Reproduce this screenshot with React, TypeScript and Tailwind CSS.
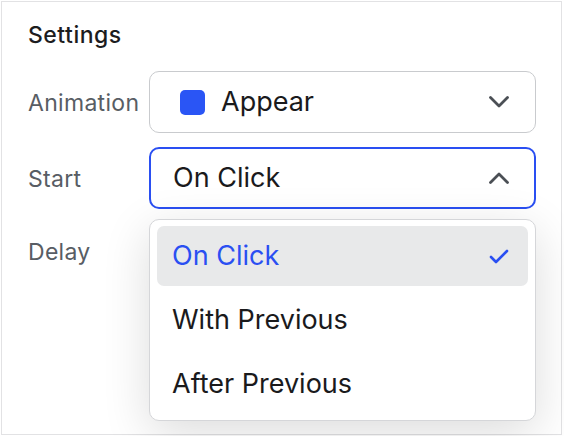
import React from "react";

const font = { fontFamily: "Inter, 'Noto Sans', sans-serif" };

function ChevronDown() {
  return (
    <svg width="20" height="12" viewBox="0 0 20 12" fill="none">
      <polyline points="1.5,1.5 10,10 18.5,1.5" stroke="#4b4f55" strokeWidth="2.8" strokeLinecap="round" strokeLinejoin="round" />
    </svg>
  );
}

function ChevronUp() {
  return (
    <svg width="20" height="12" viewBox="0 0 20 12" fill="none">
      <polyline points="1.5,10.5 10,2 18.5,10.5" stroke="#4b4f55" strokeWidth="2.8" strokeLinecap="round" strokeLinejoin="round" />
    </svg>
  );
}

function Check() {
  return (
    <svg width="20" height="15" viewBox="0 0 20 15" fill="none">
      <polyline points="2,8 7,13 18,2" stroke="#2a4ff2" strokeWidth="2.6" strokeLinecap="round" strokeLinejoin="round" />
    </svg>
  );
}

export default function App() {
  return (
    <div className="w-[564px] h-[436px] bg-white pt-px pl-px" style={font}>
      <div className="w-[561px] h-[434px] border border-[#e2e2e4] bg-white pl-[26px] pr-[25px] pt-[18px]">
        <div className="text-[23px] leading-[30px] font-medium tracking-[0.5px] text-[#1c1c1e]">Settings</div>
        <div className="mt-[21px] flex flex-col gap-[14px]">
          <div className="flex items-center">
            <div className="w-[121px] text-[23px] tracking-[0.3px] text-[#585d64] pt-[2px]">Animation</div>
            <div className="flex-1 h-[62px] rounded-[10px] border-[1.5px] border-[#c9cbce] flex items-center pl-[30px] pr-[26px]">
              <div className="w-[25px] h-[25px] rounded-[5px] bg-[#2a55f5]" />
              <span className="ml-[16px] text-[27px] text-[#1a1a1c] flex-1">Appear</span>
              <ChevronDown />
            </div>
          </div>
          <div className="flex items-center">
            <div className="w-[121px] text-[23px] tracking-[0.3px] text-[#585d64] pt-[2px]">Start</div>
            <div className="relative flex-1">
              <div className="h-[62px] rounded-[10px] border-2 border-[#2a4ff2] flex items-center pl-[22px] pr-[25px]">
                <span className="text-[27px] text-[#1a1a1c] flex-1">On Click</span>
                <ChevronUp />
              </div>
              <div className="absolute left-0 right-0 top-[72px] z-10 rounded-[10px] border-[1.5px] border-[#d5d6d9] bg-white px-[7px] py-[6px] flex flex-col gap-[4px] shadow-[0_12px_48px_rgba(0,0,0,0.14)]">
                <div className="h-[60px] rounded-[7px] bg-[#e8e9ea] flex items-center pl-[15px] pr-[19px]">
                  <span className="flex-1 text-[27px] text-[#2a4ff2]">On Click</span>
                  <Check />
                </div>
                <div className="h-[60px] flex items-center pl-[15px]">
                  <span className="text-[27px] text-[#1a1a1c]">With Previous</span>
                </div>
                <div className="h-[60px] flex items-center pl-[15px]">
                  <span className="text-[27px] text-[#1a1a1c]">After Previous</span>
                </div>
              </div>
            </div>
          </div>
          <div className="flex items-start">
            <div className="w-[121px] text-[23px] tracking-[0.3px] text-[#585d64] mt-[12px]">Delay</div>
          </div>
        </div>
      </div>
    </div>
  );
}
